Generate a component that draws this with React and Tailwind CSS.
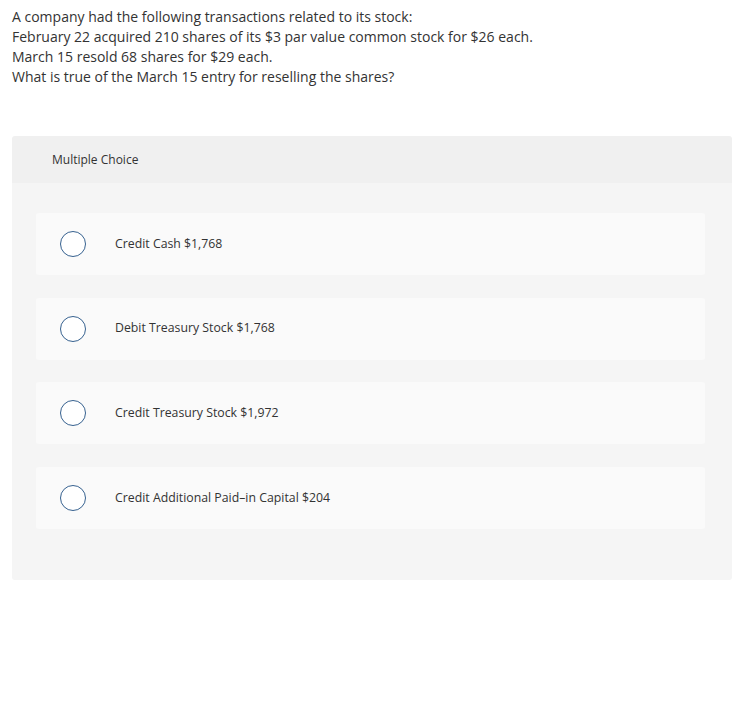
import React from 'react';

const options = [
  'Credit Cash $1,768',
  'Debit Treasury Stock $1,768',
  'Credit Treasury Stock $1,972',
  'Credit Additional Paid–in Capital $204',
];

export default function App() {
  return (
    <div className="min-h-[702px] bg-white px-3 pt-[7px] text-[#333]" style={{ fontFamily: '"Open Sans", "Liberation Sans", sans-serif' }}>
      <div className="text-[14px] leading-5">
        <p>A company had the following transactions related to its stock:</p>
        <p>February 22 acquired 210 shares of its $3 par value common stock for $26 each.</p>
        <p>March 15 resold 68 shares for $29 each.</p>
        <p>What is true of the March 15 entry for reselling the shares?</p>
      </div>

      <div className="mt-[49px] w-[720px] rounded-[3px] overflow-hidden">
        <div className="h-[47px] bg-[#f0f0f0] pl-10 flex items-center text-[12px]">Multiple Choice</div>
        <div className="bg-[#f5f5f5] pl-6 pr-[27px] pt-[30px] pb-[51px] flex flex-col gap-[22.7px]">
          {options.map((o) => (
            <div key={o} className="h-[62px] bg-[#fafafa] rounded-[3px] flex items-center pl-6">
              <span className="w-[26px] h-[26px] rounded-full border-[1.5px] border-[#36618f] bg-white shrink-0" />
              <span className="ml-[29px] text-[12.3px]">{o}</span>
            </div>
          ))}
        </div>
      </div>
    </div>
  );
}
